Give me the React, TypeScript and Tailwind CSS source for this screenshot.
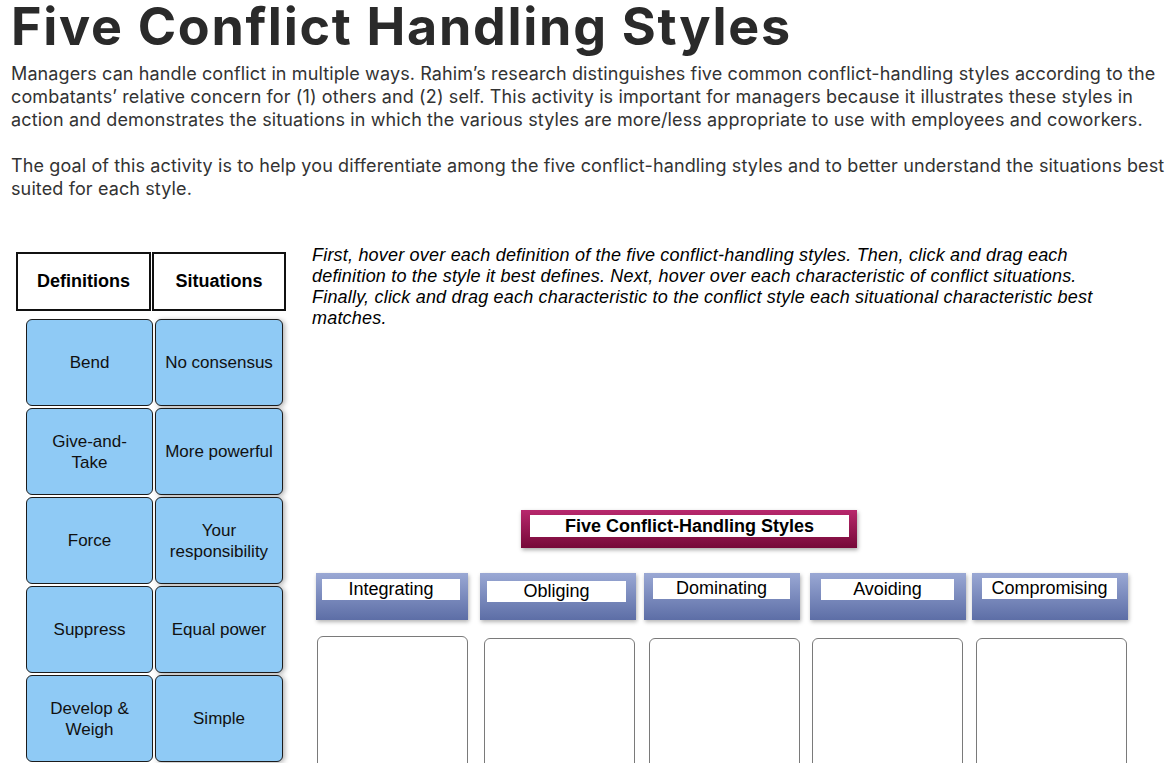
import React from 'react';

const rows = [
  { def: ['Bend'], sit: ['No consensus'] },
  { def: ['Give-and-', 'Take'], sit: ['More powerful'] },
  { def: ['Force'], sit: ['Your', 'responsibility'] },
  { def: ['Suppress'], sit: ['Equal power'] },
  { def: ['Develop &', 'Weigh'], sit: ['Simple'] },
];

const styles = [
  { name: 'Integrating', box: 'w-[152px]', label: 'ml-[6px] mt-[6px] w-[138px]' },
  { name: 'Obliging', box: 'ml-[12px] w-[156px]', label: 'ml-[7px] mt-[8px] w-[139px]' },
  { name: 'Dominating', box: 'ml-[8px] w-[156px]', label: 'ml-[9px] mt-[5px] w-[137px]' },
  { name: 'Avoiding', box: 'ml-[10px] w-[156px]', label: 'ml-[11px] mt-[6px] w-[133px]' },
  { name: 'Compromising', box: 'ml-[6px] w-[156px]', label: 'ml-[10px] mt-[5px] w-[135px]' },
];

const zones = ['ml-[5px] mt-[16px]', 'ml-[16px] mt-[18px]', 'ml-[14px] mt-[18px]', 'ml-[12px] mt-[18px]', 'ml-[13px] mt-[18px]'];

function Card({ lines, shadow }: { lines: string[]; shadow?: boolean }) {
  return (
    <div
      className={
        'flex h-[87px] flex-col items-center justify-center rounded-[6px] border border-[#1c1c1c] bg-[#8fcaf5] text-center text-[17px] leading-[21px] text-[#111]' +
        (shadow ? ' shadow-[2px_1px_5px_rgba(0,0,0,0.3)]' : '')
      }
    >
      {lines.map((l, i) => (
        <span key={i}>{l}</span>
      ))}
    </div>
  );
}

export default function App() {
  return (
    <div className="h-[763px] w-[1168px] overflow-hidden bg-white">
      {/* Heading */}
      <h1 className="h-[62px] pl-[11px] font-['Inter',sans-serif] text-[52px] font-bold leading-[53px] tracking-[1.7px] whitespace-nowrap text-[#2a2a2a]">
        Five Conflict Handling Styles
      </h1>

      <div className="pl-[11px] font-['Inter',sans-serif] text-[18px] leading-[23px] tracking-[0.12px] whitespace-nowrap text-[#333]">
        <p>Managers can handle conflict in multiple ways. Rahim’s research distinguishes five common conflict-handling styles according to the</p>
        <p>combatants’ relative concern for (1) others and (2) self. This activity is important for managers because it illustrates these styles in</p>
        <p>action and demonstrates the situations in which the various styles are more/less appropriate to use with employees and coworkers.</p>
        <p className="mt-[23px]">The goal of this activity is to help you differentiate among the five conflict-handling styles and to better understand the situations best</p>
        <p>suited for each style.</p>
      </div>

      {/* Activity */}
      <div className="mt-[45px] flex font-['Liberation_Sans',Arial,sans-serif]">
        <div className="w-[296px] shrink-0 pt-[7px] pl-[16px]">
          <div className="flex gap-[1px]">
            <div className="flex h-[59px] w-[135px] items-center justify-center border-2 border-[#111] text-[18px] font-bold text-black">
              Definitions
            </div>
            <div className="flex h-[59px] w-[134px] items-center justify-center border-2 border-[#111] text-[18px] font-bold text-black">
              Situations
            </div>
          </div>
          <div className="mt-[8px] ml-[10px] grid grid-cols-[127px_128px] gap-[2px]">
            {rows.map((r, i) => (
              <React.Fragment key={i}>
                <Card lines={r.def} />
                <Card lines={r.sit} shadow />
              </React.Fragment>
            ))}
          </div>
        </div>

        <div className="pl-[16px]">
          <p className="text-[18px] leading-[21px] tracking-[0.2px] whitespace-nowrap text-black italic">
            First, hover over each definition of the five conflict-handling styles. Then, click and drag each
            <br />
            definition to the style it best defines. Next, hover over each characteristic of conflict situations.
            <br />
            Finally, click and drag each characteristic to the conflict style each situational characteristic best
            <br />
            matches.
          </p>

          <div className="mt-[181px] ml-[209px] h-[38px] w-[336px] bg-gradient-to-b from-[#b8286d] to-[#760838] pt-[5px] pl-[9px] shadow-[1px_2px_4px_rgba(0,0,0,0.35)]">
            <div className="flex h-[22px] w-[319px] items-center justify-center bg-white text-[18px] font-bold text-black">
              Five Conflict-Handling Styles
            </div>
          </div>

          <div className="mt-[25px] flex pl-[4px]">
            {styles.map((s) => (
              <div
                key={s.name}
                className={'h-[47px] shrink-0 bg-gradient-to-b from-[#9aa8d4] to-[#5d6ea6] shadow-[1px_2px_4px_rgba(0,0,0,0.3)] ' + s.box}
              >
                <div className={'flex h-[21px] items-center justify-center bg-white text-[18px] text-black ' + s.label}>{s.name}</div>
              </div>
            ))}
          </div>

          <div className="flex">
            {zones.map((z, i) => (
              <div key={i} className={'h-[200px] w-[151px] shrink-0 rounded-[6px] border border-[#7a7a7a] bg-white ' + z} />
            ))}
          </div>
        </div>
      </div>
    </div>
  );
}
